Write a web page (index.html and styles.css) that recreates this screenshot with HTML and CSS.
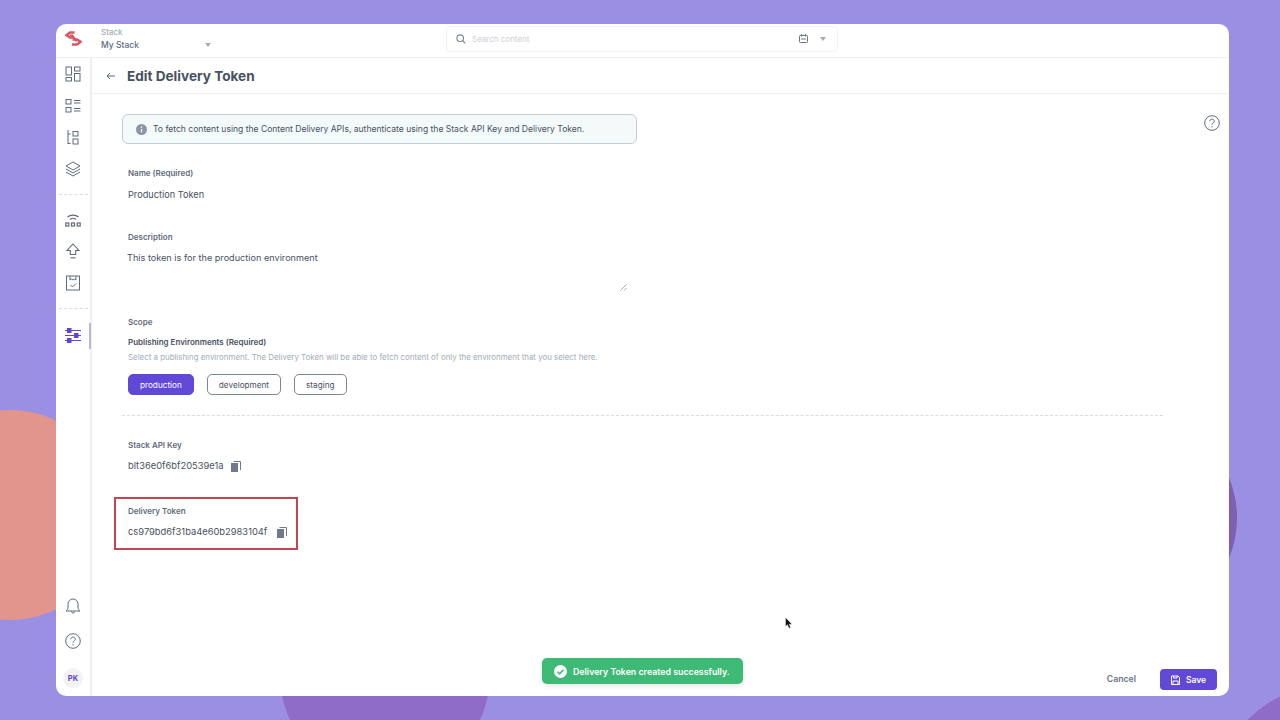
FILE: index.html
```html
<!DOCTYPE html>
<html lang="en">
<head>
    <meta charset="UTF-8">
    <meta name="viewport" content="width=device-width, initial-scale=1.0">
    <title>Edit Delivery Token</title>
    <link rel="stylesheet" href="styles.css">
</head>
<body>

    <!-- background blobs -->
    <div class="backdrop">
        <div class="blob blob-pink"></div>
        <div class="blob blob-right"></div>
        <div class="blob blob-bottom"></div>
        <div class="blob blob-corner"></div>
    </div>

    <div class="app-window">
        <header class="top-bar">
            <div class="logo-cell">
                <svg width="17" height="15" viewBox="0 0 17 15" fill="none" stroke="#d9575f" stroke-width="2.400">
                    <path d="M9.500 1.500H5L1.500 4.200 5 6.500h4"/>
                    <path d="M7.500 8.500h4.500l3.500 2.300-3.500 2.700H7"/>
                    <path d="M5 4.500h2.500l4 6" stroke-width="1.800"/>
                </svg>
            </div>
            <div class="stack-switch">
                <div class="stack-label">Stack</div>
                <div class="stack-name">My Stack <span class="caret stack-caret"></span></div>
            </div>
            <div class="search-box">
                <svg width="10" height="10" viewBox="0 0 10 10" fill="none" stroke="#7d8794" stroke-width="1.100">
                    <circle cx="4.200" cy="4.200" r="3.300"/>
                    <path d="M6.700 6.700 9.300 9.300"/>
                </svg>
                <span class="search-text">Search content</span>
                <svg class="search-date" width="9" height="9" viewBox="0 0 9 9" fill="none" stroke="#6b7482" stroke-width="1">
                    <rect x="0.500" y="1.500" width="8" height="7" rx="0.800"/>
                    <path d="M2.500 0v2.500M6.500 0v2.500M2 5h5"/>
                </svg>
                <span class="caret"></span>
            </div>
        </header>

        <div class="app-body">
            <nav class="side-nav">
                <div class="nav-group">
                    <svg class="nav-icon" viewBox="0 0 16 16" fill="none" stroke="#5f6b7a" stroke-width="1">
                        <rect x="1" y="1" width="5.500" height="8"/><rect x="9.500" y="1" width="5.500" height="4"/>
                        <rect x="1" y="11.500" width="5.500" height="3.500"/><rect x="9.500" y="7.500" width="5.500" height="7.500"/>
                    </svg>
                    <svg class="nav-icon" viewBox="0 0 16 16" fill="none" stroke="#5f6b7a" stroke-width="1">
                        <rect x="1" y="1.500" width="5" height="4.500"/><rect x="1" y="9.500" width="5" height="4.500"/>
                        <path d="M9 2.500h6.500M9 5h6.500M9 10.500h6.500M9 13h6.500"/>
                    </svg>
                    <svg class="nav-icon" viewBox="0 0 16 16" fill="none" stroke="#5f6b7a" stroke-width="1">
                        <path d="M3 1v14M3 5h2.500M3 14.500h2.500"/>
                        <rect x="8" y="2.500" width="5" height="4.500"/><rect x="8" y="10" width="5" height="5"/>
                    </svg>
                    <svg class="nav-icon" viewBox="0 0 16 16" fill="none" stroke="#5f6b7a" stroke-width="1">
                        <path d="M8 1 15 5 8 9 1 5z"/><path d="M1 8l7 4 7-4"/><path d="M1 11l7 4 7-4"/>
                    </svg>
                </div>
                <div class="nav-group nav-group-line">
                    <svg class="nav-icon" viewBox="0 0 16 16" fill="none" stroke="#5f6b7a" stroke-width="1.200">
                        <path d="M2.500 5C5.500 2.400 10.500 2.400 13.500 5"/><path d="M5 7.500C6.800 6 9.200 6 11 7.500"/>
                        <rect x="0.800" y="11" width="3" height="3"/><rect x="6.500" y="11" width="3" height="3"/><rect x="12.200" y="11" width="3" height="3"/>
                    </svg>
                    <svg class="nav-icon" viewBox="0 0 16 16" fill="none" stroke="#5f6b7a" stroke-width="1.100">
                        <path d="M8 1 14 7.500H10.700V11.500H5.300V7.500H2z"/><path d="M5.500 14.800h5"/>
                    </svg>
                    <svg class="nav-icon" viewBox="0 0 16 16" fill="none" stroke="#5f6b7a" stroke-width="1">
                        <rect x="1.500" y="1" width="13" height="14"/><path d="M5 1v4l1.500-1L8 5l1.500-1L11 5V1"/><path d="M5.500 10l2 2 3.500-3.500"/>
                    </svg>
                </div>
                <div class="nav-group nav-group-line nav-active">
                    <svg class="nav-icon" viewBox="0 0 16 16" fill="#5c48d0" stroke="#5c48d0">
                        <path d="M0 3.500h16M0 8.500h16M0 13.500h16" stroke-width="1.100"/>
                        <rect x="2" y="1" width="4.500" height="5" stroke="none"/>
                        <rect x="9" y="6" width="4.500" height="5" stroke="none"/>
                        <rect x="2" y="11" width="4.500" height="5" stroke="none"/>
                    </svg>
                </div>
                <div class="nav-bottom">
                    <svg class="nav-icon" viewBox="0 0 16 16" fill="none" stroke="#5f6b7a" stroke-width="1">
                        <path d="M1 13c1.500-1 2-2 2-4V6a5 5 0 0 1 10 0v3c0 2 .5 3 2 4z"/><path d="M6.500 13.500a1.500 1.500 0 0 0 3 0"/>
                    </svg>
                    <svg class="nav-icon" viewBox="0 0 16 16" fill="none" stroke="#5f6b7a" stroke-width="1">
                        <circle cx="8" cy="8" r="7.300"/>
                        <path d="M5.800 6.200C5.800 3.400 10.300 3.500 10.300 6.200 10.300 7.900 8 7.900 8 9.800"/><path d="M8 11.200v1.200"/>
                    </svg>
                    <div class="avatar">PK</div>
                </div>
            </nav>

            <main class="page">
                <div class="page-head">
                    <svg width="10" height="8" viewBox="0 0 10 8" fill="none" stroke="#5f6b7a" stroke-width="1">
                        <path d="M9 4H1M4 1 1 4l3 3"/>
                    </svg>
                    <h1>Edit Delivery Token</h1>
                </div>

                <div class="page-content">
                    <div class="alert-row">
                        <div class="alert">
                            <svg width="11" height="11" viewBox="0 0 11 11">
                                <circle cx="5.500" cy="5.500" r="5.500" fill="#8b96a5"/>
                                <path d="M5.500 5v3.200M5.500 2.600v1.200" stroke="#fff" stroke-width="1.300"/>
                            </svg>
                            To fetch content using the Content Delivery APIs, authenticate using the Stack API Key and Delivery Token.
                        </div>
                        <svg class="help-icon" width="16" height="16" viewBox="0 0 16 16" fill="none" stroke="#5f6b7a" stroke-width="1">
                            <circle cx="8" cy="8" r="7.300"/>
                            <path d="M5.800 6.200C5.800 3.400 10.300 3.500 10.300 6.200 10.300 7.900 8 7.900 8 9.800"/><path d="M8 11.200v1.200"/>
                        </svg>
                    </div>

                    <div class="field field-name">
                        <div class="label">Name (Required)</div>
                        <div class="value">Production Token</div>
                    </div>

                    <div class="field field-desc">
                        <div class="label">Description</div>
                        <div class="textarea">This token is for the production environment
                            <svg class="resize" width="7" height="7" viewBox="0 0 7 7" stroke="#7d8794" stroke-width="0.700">
                                <path d="M0.500 6.500 6.500 0.500M4 6.500 6.500 4"/>
                            </svg>
                        </div>
                    </div>

                    <div class="field field-scope">
                        <div class="label">Scope</div>
                        <div class="label label-dark">Publishing Environments (Required)</div>
                        <div class="help-text">Select a publishing environment. The Delivery Token will be able to fetch content of only the environment that you select here.</div>
                        <div class="env-list">
                            <span class="env-btn env-selected">production</span>
                            <span class="env-btn">development</span>
                            <span class="env-btn">staging</span>
                        </div>
                    </div>

                    <div class="divider"></div>

                    <div class="field field-key">
                        <div class="label">Stack API Key</div>
                        <div class="value value-copy">blt36e0f6bf20539e1a
                            <svg width="10" height="11" viewBox="0 0 10 11">
                                <rect x="0" y="2" width="7" height="9" fill="#6f7b8c"/>
                                <path d="M2.500 0.500H9.500V9" fill="none" stroke="#6f7b8c"/>
                            </svg>
                        </div>
                    </div>

                    <div class="field token-box">
                        <div class="label">Delivery Token</div>
                        <div class="value value-copy value-token">cs979bd6f31ba4e60b2983104f
                            <svg width="10" height="11" viewBox="0 0 10 11">
                                <rect x="0" y="2" width="7" height="9" fill="#6f7b8c"/>
                                <path d="M2.500 0.500H9.500V9" fill="none" stroke="#6f7b8c"/>
                            </svg>
                        </div>
                    </div>
                </div>

                <div class="page-foot">
                    <span class="cancel">Cancel</span>
                    <span class="save-btn">
                        <svg width="9" height="10" viewBox="0 0 9 10" fill="none" stroke="#fff" stroke-width="1">
                            <path d="M0.500 1h6.500l1.500 1.500V9.500H0.500z"/><path d="M2.500 1v2h3.500V1M2 9.500V6h5v3.500"/>
                        </svg>
                        Save
                    </span>
                </div>
            </main>
        </div>

        <div class="toast">
            <svg width="13" height="13" viewBox="0 0 13 13">
                <circle cx="6.500" cy="6.500" r="6.500" fill="#fff"/>
                <path d="M3.500 6.700 5.600 8.800 9.500 4.700" fill="none" stroke="#3fb976" stroke-width="1.600"/>
            </svg>
            Delivery Token created successfully.
        </div>

        <svg class="cursor" width="8" height="12" viewBox="0 0 8 12">
            <path d="M0.500 0.500V9.500L2.500 7.700 4 11.300 5.600 10.600 4.200 7.200H7z" fill="#111" stroke="#fff" stroke-width="0.400"/>
        </svg>
    </div>

</body>
</html>
```

FILE: styles.css
```css
html {
    overflow: hidden;
}
body {
    font-family: Inter, "Noto Sans", sans-serif;
    background-color: #9b8fe4;
    margin: 0;
    height: 720px;
    overflow: hidden;
    position: relative;
    color: #475161;
}
.backdrop {
    position: absolute;
    left: 0;
    top: 0;
    width: 1280px;
    height: 720px;
    overflow: hidden;
}
.blob {
    position: absolute;
    border-radius: 50%;
    width: 210px;
    height: 210px;
}
.blob-pink {
    left: -95px;
    top: 410px;
    background-color: #e2958c;
}
.blob-right {
    left: 1027px;
    top: 413px;
    background-color: #7d5fb4;
}
.blob-bottom {
    left: 280px;
    top: 570px;
    background-color: #8e6cc8;
}
.blob-corner {
    left: 1215px;
    top: 685px;
    width: 230px;
    height: 230px;
    background-color: #8e6cc8;
}

.app-window {
    position: absolute;
    left: 56px;
    top: 24px;
    width: 1173px;
    height: 672px;
    background-color: #fff;
    border-radius: 10px;
    display: flex;
    flex-direction: column;
    overflow: hidden;
}

/* top bar */
.top-bar {
    height: 33px;
    flex-shrink: 0;
    display: flex;
    align-items: center;
    border-bottom: 1px solid #eef0f3;
    position: relative;
}
.logo-cell {
    width: 35px;
    display: flex;
    justify-content: center;
    margin-top: -5px;
}
.stack-switch {
    margin-left: 10px;
    margin-top: -4px;
    width: 345px;
}
.stack-label {
    font-size: 8px;
    line-height: 12px;
    color: #a3acb8;
    font-weight: 500;
}
.stack-name {
    font-size: 8.500px;
    line-height: 14px;
    font-weight: 500;
    color: #5f6b7a;
    display: flex;
    align-items: center;
}
.caret {
    width: 0;
    height: 0;
    border-left: 3px solid transparent;
    border-right: 3px solid transparent;
    border-top: 4px solid #a3acb8;
}
.stack-caret {
    margin-left: 66px;
}
.search-box {
    width: 392px;
    height: 26px;
    margin-top: -4px;
    box-sizing: border-box;
    padding: 0 11px 0 9px;
    border: 1px solid #f1f2f5;
    border-radius: 4px;
    display: flex;
    align-items: center;
}
.search-text {
    margin-left: 6px;
    flex: 1;
    font-size: 8px;
    color: #ccd1d8;
}
.search-date {
    margin-right: 12px;
}

.app-body {
    flex: 1;
    display: flex;
    min-height: 0;
}

/* left nav */
.side-nav {
    width: 36px;
    box-sizing: border-box;
    flex-shrink: 0;
    border-right: 2px solid #eeeef3;
    display: flex;
    flex-direction: column;
    align-items: center;
}
.nav-group {
    width: 29px;
    padding-top: 8px;
    display: flex;
    flex-direction: column;
    align-items: center;
    gap: 15.500px;
}
.nav-group-line {
    margin-top: 17px;
    padding-top: 17px;
    border-top: 1px dashed #d9dce2;
}
.nav-icon {
    width: 16px;
    height: 16px;
}
.nav-active {
    position: relative;
    padding-top: 18px;
}
.nav-active::after {
    content: "";
    position: absolute;
    right: -3.500px;
    top: 14px;
    width: 2px;
    height: 26px;
    background-color: #b9b4d8;
}
.nav-bottom {
    margin-top: auto;
    padding-bottom: 8px;
    display: flex;
    flex-direction: column;
    align-items: center;
    gap: 19px;
}
.avatar {
    width: 20px;
    height: 20px;
    border-radius: 50%;
    background-color: #f3f3f6;
    color: #5c48d0;
    font-size: 7.500px;
    font-weight: 700;
    display: flex;
    align-items: center;
    justify-content: center;
}

/* page */
.page {
    flex: 1;
    min-width: 0;
    display: flex;
    flex-direction: column;
}
.page-head {
    height: 35px;
    flex-shrink: 0;
    border-bottom: 1px solid #eef0f3;
    padding-left: 14px;
    display: flex;
    align-items: center;
    gap: 11px;
}
h1 {
    margin: 0;
    font-size: 13.600px;
    font-weight: 700;
    color: #475161;
}
.page-content {
    flex: 1;
    padding: 20px 9px 0 30px;
}
.alert-row {
    display: flex;
    justify-content: space-between;
    align-items: flex-start;
}
.alert {
    width: 515px;
    height: 30px;
    box-sizing: border-box;
    padding-left: 13px;
    background-color: #f4fafa;
    border: 1px solid #c4ccd5;
    border-radius: 6px;
    display: flex;
    align-items: center;
    gap: 6px;
    font-size: 8.550px;
    color: #475161;
}
.help-icon {
    margin-left: auto;
    margin-top: 1px;
}
.field {
    padding-left: 6px;
}
.label {
    font-size: 8px;
    line-height: 12px;
    font-weight: 600;
    color: #5f6b7a;
}
.label-dark {
    color: #475161;
}
.value {
    font-size: 9.200px;
    line-height: 14px;
    color: #475161;
}
.field-name {
    margin-top: 23px;
}
.field-name .value {
    margin-top: 9px;
}
.field-desc {
    margin-top: 29px;
}
.textarea {
    position: relative;
    width: 500px;
    height: 40px;
    margin: 8px 0 0 -1px;
    font-size: 9.150px;
    line-height: 14px;
}
.resize {
    position: absolute;
    right: 0;
    bottom: 0;
}
.field-scope {
    margin-top: 25px;
}
.field-scope .label-dark {
    margin-top: 8px;
}
.help-text {
    margin-top: 3px;
    font-size: 7.900px;
    line-height: 12px;
    color: #a3acb8;
}
.env-list {
    display: flex;
    gap: 13px;
    margin-top: 11px;
}
.env-btn {
    height: 21px;
    box-sizing: border-box;
    padding: 0 11px;
    border: 1px solid #7d8794;
    border-radius: 5px;
    font-size: 8.200px;
    color: #475161;
    display: flex;
    align-items: center;
}
.env-selected {
    background-color: #6248d6;
    border-color: #6248d6;
    color: #fff;
}
.divider {
    width: 1041px;
    margin-top: 20px;
    border-top: 1px dashed #d9dce2;
}
.field-key {
    margin-top: 23px;
}
.value-copy {
    display: flex;
    align-items: center;
    gap: 7px;
    margin-top: 8px;
    font-size: 9.350px;
}
.token-box {
    width: 184px;
    height: 53px;
    box-sizing: border-box;
    margin: 24px 0 0 -8px;
    padding: 6px 0 0 12px;
    border: 2px solid #c0474f;
}
.value-token {
    gap: 10px;
}
.page-foot {
    height: 27px;
    padding: 0 12px 0 0;
    display: flex;
    justify-content: flex-end;
    align-items: flex-start;
    gap: 24px;
}
.cancel {
    height: 20px;
    display: flex;
    align-items: center;
    font-size: 8.700px;
    font-weight: 600;
    color: #6b7482;
}
.save-btn {
    width: 57px;
    height: 21px;
    box-sizing: border-box;
    background-color: #6248d6;
    color: #fff;
    border-radius: 4px;
    font-size: 8.500px;
    font-weight: 600;
    display: flex;
    align-items: center;
    justify-content: center;
    gap: 6px;
}
.toast {
    position: absolute;
    left: 486px;
    top: 634px;
    width: 201px;
    height: 26px;
    box-sizing: border-box;
    padding-left: 12px;
    background-color: #3fb976;
    border-radius: 5px;
    box-shadow: 0 2px 5px rgba(0, 0, 0, 0.1);
    color: #fff;
    font-size: 8.800px;
    font-weight: 600;
    display: flex;
    align-items: center;
    gap: 6px;
}
.cursor {
    position: absolute;
    left: 729px;
    top: 593px;
}
```
